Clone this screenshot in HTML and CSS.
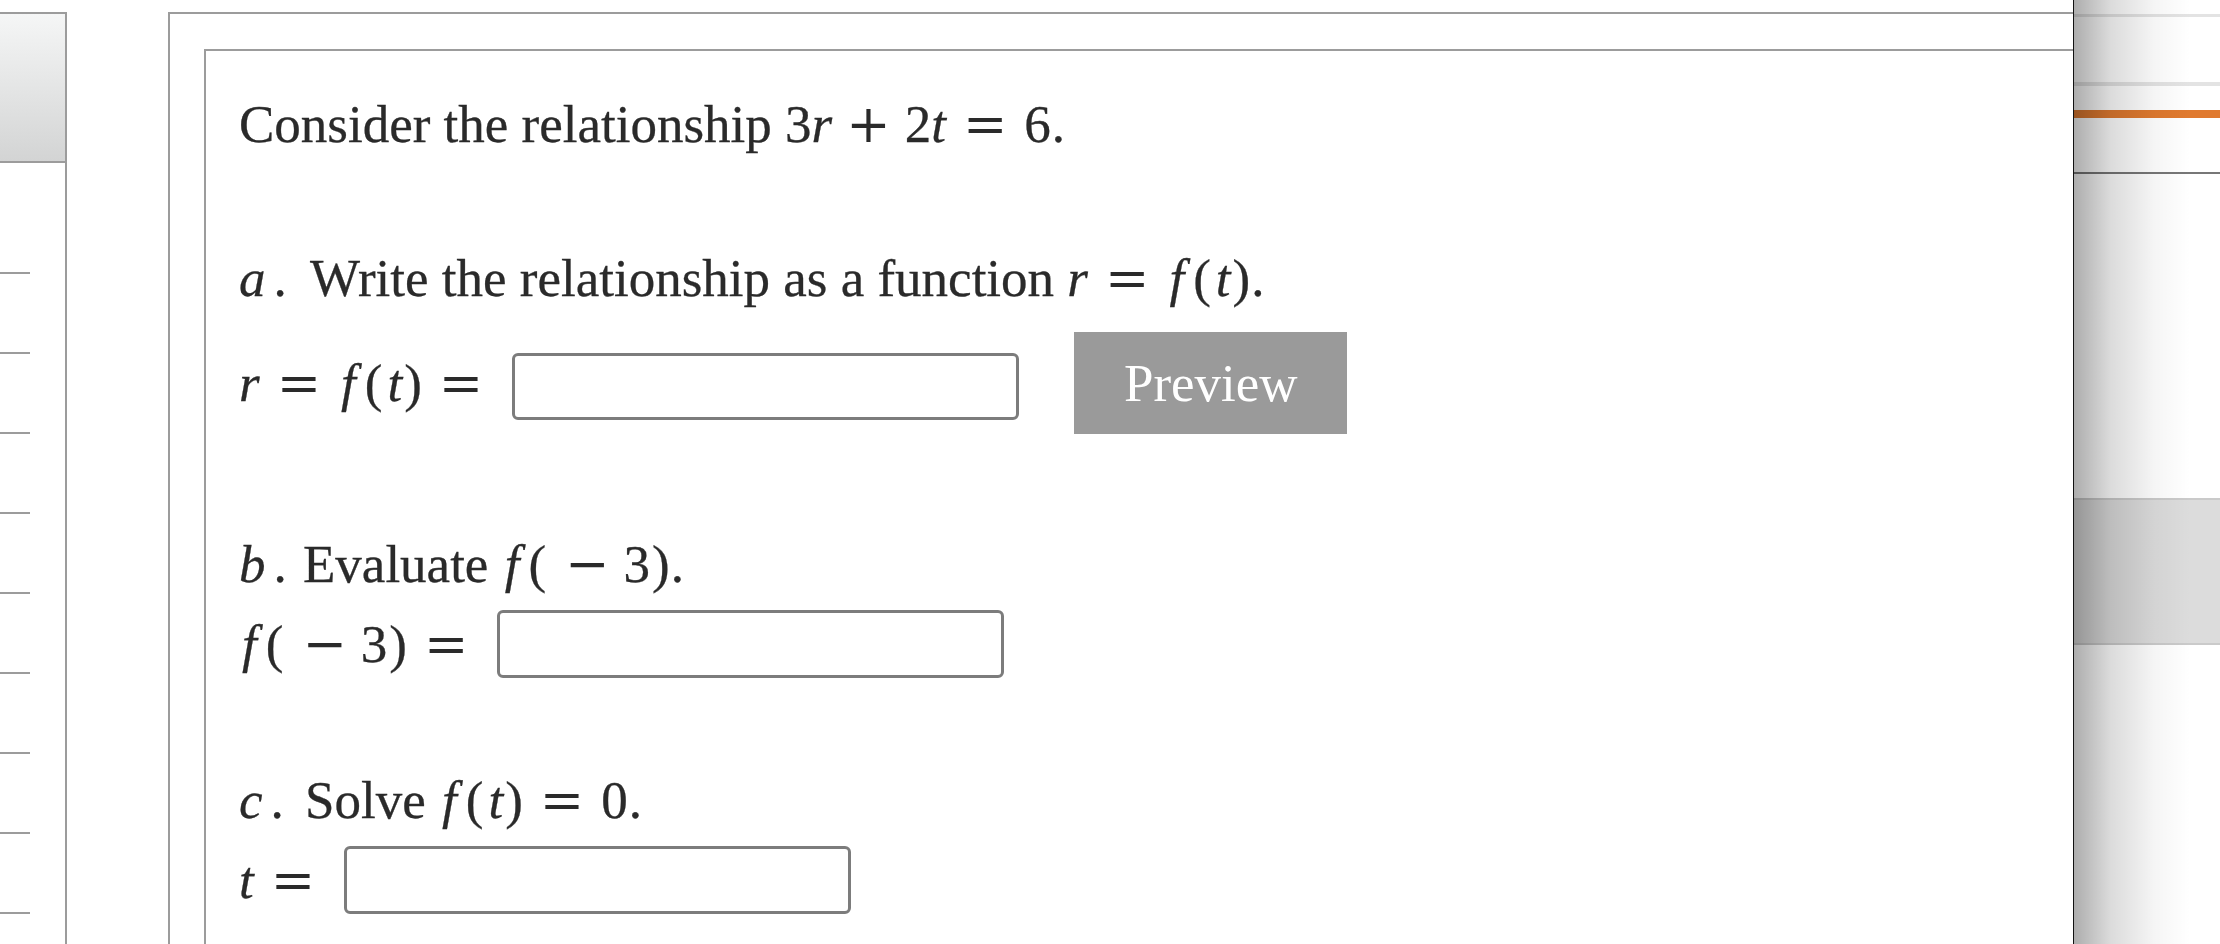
FILE: index.html
```html
<!DOCTYPE html>
<html lang="en">
<head>
<meta charset="utf-8">
<title>Problem</title>
<link rel="stylesheet" href="styles.css">
</head>
<body>
<aside class="sidebar">
  <div class="sidebar-head"></div>
  <div class="ticks">
    <span class="tick"></span><span class="tick"></span><span class="tick"></span>
    <span class="tick"></span><span class="tick"></span><span class="tick"></span>
    <span class="tick"></span><span class="tick"></span><span class="tick"></span>
  </div>
</aside>

<main class="outer">
  <div class="inner">
    <div class="problem">
      <p class="line">Consider the relationship <span class="math"><span class="mn">3</span><span class="mi">r</span><span class="mo bin">+</span><span class="mn">2</span><span class="mi">t</span><span class="mo rel">=</span><span class="mn">6</span><span class="punct">.</span></span></p>

      <section class="part">
        <p class="line"><span class="label label-a"><span class="mi">a</span><span class="punct">.</span></span> Write the relationship as a function <span class="math"><span class="mi">r</span><span class="mo rel">=</span><span class="mi f">f</span><span class="mo open">(</span><span class="mi">t</span><span class="mo close">)</span><span class="punct">.</span></span></p>
        <div class="answer-row preview-row">
          <span class="math"><span class="mi">r</span><span class="mo rel">=</span><span class="mi f">f</span><span class="mo open">(</span><span class="mi">t</span><span class="mo close">)</span><span class="mo rel">=</span></span>
          <input class="answer" type="text" aria-label="r = f(t)">
          <button class="preview" type="button">Preview</button>
        </div>
      </section>

      <section class="part">
        <p class="line"><span class="label label-b"><span class="mi">b</span><span class="punct">.</span></span> Evaluate <span class="math"><span class="mi f">f</span><span class="mo open">(</span><span class="mo bin">−</span><span class="mn">3</span><span class="mo close">)</span><span class="punct">.</span></span></p>
        <div class="answer-row">
          <span class="math"><span class="mi f">f</span><span class="mo open">(</span><span class="mo bin">−</span><span class="mn">3</span><span class="mo close">)</span><span class="mo rel">=</span></span>
          <input class="answer" type="text" aria-label="f(-3)">
        </div>
      </section>

      <section class="part">
        <p class="line"><span class="label"><span class="mi">c</span><span class="punct">.</span></span> Solve <span class="math"><span class="mi f">f</span><span class="mo open">(</span><span class="mi">t</span><span class="mo close">)</span><span class="mo rel">=</span><span class="mn">0</span><span class="punct">.</span></span></p>
        <div class="answer-row">
          <span class="math"><span class="mi">t</span><span class="mo rel">=</span></span>
          <input class="answer" type="text" aria-label="t">
        </div>
      </section>
    </div>
  </div>
</main>

<aside class="rightpanel">
  <div class="rp-line rp-line1"></div>
  <div class="rp-line rp-line2"></div>
  <div class="rp-orange"></div>
  <div class="rp-dark"></div>
  <div class="rp-block"></div>
</aside>
</body>
</html>
```

FILE: styles.css
```css
html, body {
  margin: 0;
  padding: 0;
}

body {
  width: 2220px;
  height: 944px;
  overflow: hidden;
  display: flex;
  align-items: stretch;
  background: #ffffff;
  font-family: "Liberation Serif", "Times New Roman", serif;
  color: #2a2a2a;
}

/* ---------- left sidebar ---------- */
.sidebar {
  flex: none;
  width: 65px;
  margin-top: 12px;
  border-top: 2px solid #9c9c9c;
  border-right: 2px solid #9c9c9c;
  display: flex;
  flex-direction: column;
}

.sidebar-head {
  height: 147px;
  border-bottom: 2px solid #9c9c9c;
  background: linear-gradient(to bottom, #f5f6f6 0%, #e6e7e7 45%, #d3d4d4 100%);
}

.ticks {
  display: flex;
  flex-direction: column;
  gap: 78px;
  margin-top: 109px;
}

.tick {
  display: block;
  width: 30px;
  height: 2px;
  background: #9c9c9c;
}

/* ---------- framed question ---------- */
.outer {
  flex: 1;
  min-width: 0;
  margin-left: 101px;
  margin-top: 12px;
  border-top: 2px solid #9c9c9c;
  border-left: 2px solid #9c9c9c;
  padding: 35px 0 0 34px;
}

.inner {
  height: 100%;
  box-sizing: border-box;
  border-top: 2px solid #9c9c9c;
  border-left: 2px solid #9c9c9c;
  padding: 41px 0 0 33px;
}

.problem {
  font-size: 53px;
  line-height: 64px;
  -webkit-text-stroke: 0.3px #2a2a2a;
}

.line {
  margin: 0;
  white-space: nowrap;
}

.part {
  margin-top: 90px;
}

/* math pieces */
.math {
  white-space: nowrap;
}

.mi {
  font-style: italic;
}

.mi.f {
  margin-left: 3px;
  margin-right: 9px;
}

.mo {
  font-style: normal;
}

.mo.open {
  margin-right: 5px;
}

.mo.close {
  margin-left: 2px;
}

.mo.rel,
.mo.bin {
  font-family: "DejaVu Serif", "Liberation Serif", serif;
  font-weight: normal;
  -webkit-text-stroke: 0;
}

.mo.rel {
  margin: 0 17px;
}

.mo.bin {
  margin: 0 14px;
}

.punct {
  margin-left: 1px;
}

.label {
  margin-right: 8px;
}

.label-a {
  margin-right: 11px;
}

.label-b {
  margin-right: 3px;
}

.label .punct {
  margin-left: 8px;
}

/* answer rows */
.answer-row {
  display: flex;
  align-items: center;
  margin-top: 14px;
}

.answer {
  box-sizing: border-box;
  width: 507px;
  height: 68px;
  margin: 0 0 0 12px;
  border: 3px solid #7c7c7c;
  border-radius: 6px;
  background: #ffffff;
  font: inherit;
  padding: 0 10px;
  outline: none;
  -webkit-text-stroke: 0;
}

.preview-row .answer {
  height: 67px;
  margin-top: 6px;
}

.preview {
  box-sizing: border-box;
  width: 273px;
  height: 102px;
  margin: 8px 0 8px 55px;
  border: none;
  background: #9a9a9a;
  color: #ffffff;
  font-family: "Liberation Serif", "Times New Roman", serif;
  font-size: 53px;
  padding: 0;
  -webkit-text-stroke: 0;
}

/* ---------- right panel ---------- */
.rightpanel {
  flex: none;
  position: relative;
  width: 146px;
  border-left: 1px solid #111111;
  padding-top: 14px;
  background: #ffffff;
  display: flex;
  flex-direction: column;
}

.rightpanel::after {
  content: "";
  position: absolute;
  inset: 0;
  background: linear-gradient(to right, rgba(0,0,0,0.32) 0%, rgba(0,0,0,0.14) 25%, rgba(0,0,0,0.04) 55%, rgba(0,0,0,0) 80%);
  pointer-events: none;
}

.rp-line {
  flex: none;
  background: #e3e3e3;
}

.rp-line1 {
  height: 3px;
}

.rp-line2 {
  height: 4px;
  margin-top: 65px;
}

.rp-orange {
  flex: none;
  height: 8px;
  margin-top: 24px;
  background: #e07a2f;
}

.rp-dark {
  flex: none;
  height: 2px;
  margin-top: 54px;
  background: #777777;
}

.rp-block {
  flex: none;
  height: 143px;
  margin-top: 324px;
  border-top: 2px solid #cacaca;
  border-bottom: 2px solid #cacaca;
  background: #dcdcdc;
}
```
